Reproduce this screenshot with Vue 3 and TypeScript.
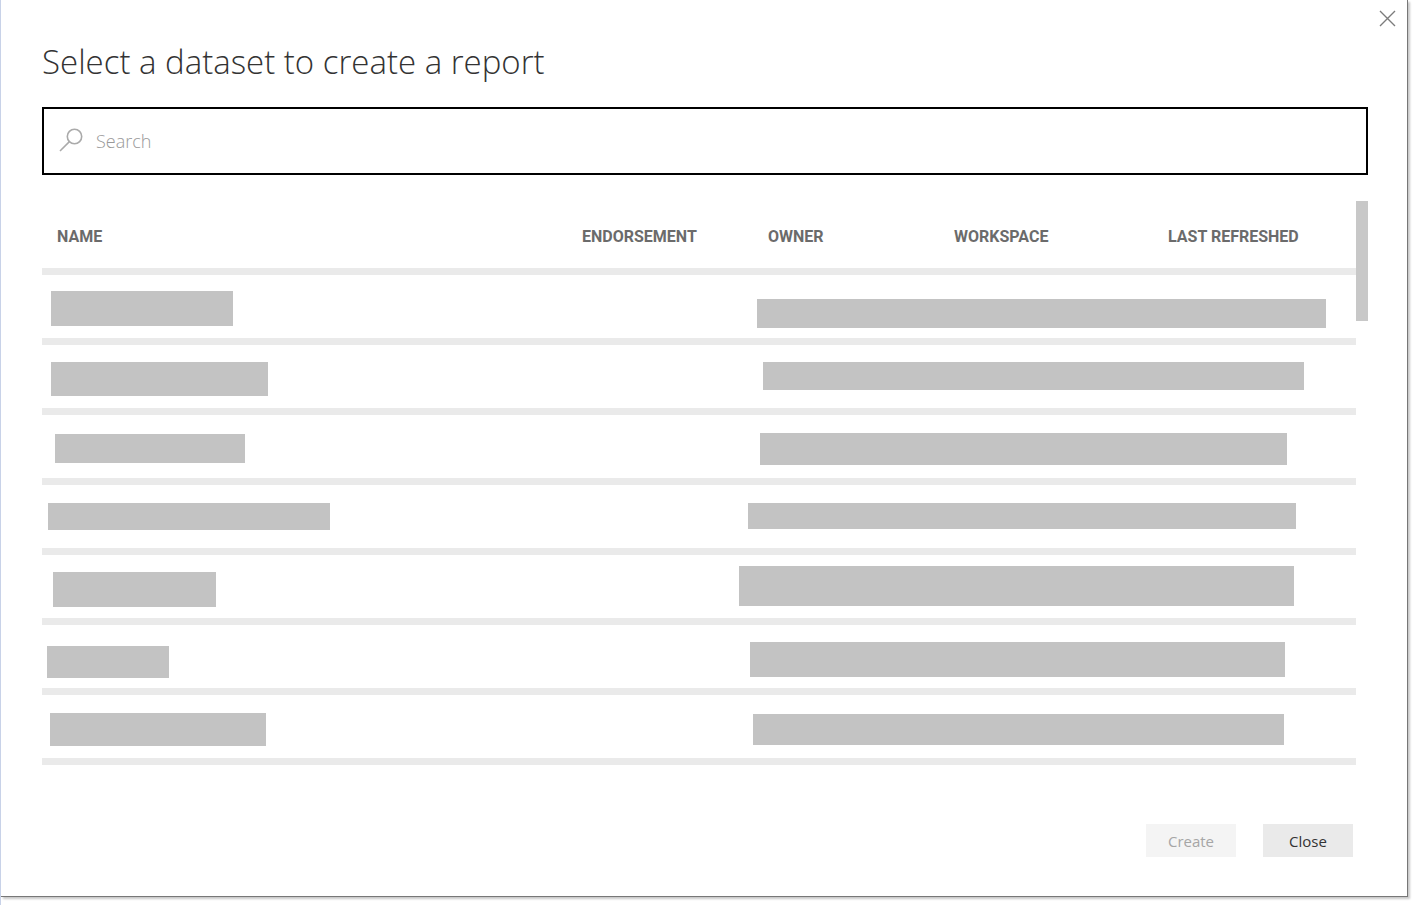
<script setup lang="ts">
import { ref } from 'vue'

interface Block {
  left: number
  top: number
  width: number
  height: number
}

interface Row {
  id: number
  name: Block
  details: Block
}

const query = ref('')

const block = (left: number, top: number, width: number, height: number): Block => ({
  left,
  top,
  width,
  height,
})

const rows: Row[] = [
  { id: 1, name: block(9, 16, 182, 35), details: block(19, 24, 569, 29) },
  { id: 2, name: block(9, 17, 217, 34), details: block(25, 17, 541, 28) },
  { id: 3, name: block(13, 19, 190, 29), details: block(22, 18, 527, 32) },
  { id: 4, name: block(6, 18, 282, 27), details: block(10, 18, 548, 26) },
  { id: 5, name: block(11, 17, 163, 35), details: block(1, 11, 555, 40) },
  { id: 6, name: block(5, 21, 122, 32), details: block(12, 17, 535, 35) },
  { id: 7, name: block(8, 18, 216, 33), details: block(15, 19, 531, 31) },
]

const blockStyle = (b: Block) => ({
  marginLeft: `${b.left}px`,
  marginTop: `${b.top}px`,
  width: `${b.width}px`,
  height: `${b.height}px`,
})
</script>

<template>
  <div class="page">
    <section class="dialog" role="dialog" aria-labelledby="dialog-title">
      <button class="dismiss" type="button" aria-label="Dismiss">
        <svg width="17" height="17" viewBox="0 0 17 17" aria-hidden="true">
          <path d="M1 1L16 16M16 1L1 16" fill="none" stroke="#7c7c7c" stroke-width="1.4" />
        </svg>
      </button>

      <h1 id="dialog-title" class="title">Select a dataset to create a report</h1>

      <label class="search">
        <svg class="search-icon" width="24" height="24" viewBox="0 0 24 24" aria-hidden="true">
          <circle cx="15.5" cy="8.5" r="7.2" fill="none" stroke="#aaa" stroke-width="1.6" />
          <path d="M10.4 13.6L1 23" fill="none" stroke="#aaa" stroke-width="1.6" />
        </svg>
        <input v-model="query" class="search-input" type="text" placeholder="Search" aria-label="Search" />
      </label>

      <div class="list">
        <table class="datasets">
          <colgroup>
            <col />
            <col class="col-endorsement" />
            <col class="col-owner" />
            <col class="col-workspace" />
            <col class="col-refreshed" />
          </colgroup>
          <thead>
            <tr>
              <th scope="col">NAME</th>
              <th scope="col">ENDORSEMENT</th>
              <th scope="col" class="owner">OWNER</th>
              <th scope="col">WORKSPACE</th>
              <th scope="col">LAST REFRESHED</th>
            </tr>
          </thead>
          <tbody>
            <tr v-for="row in rows" :key="row.id">
              <td><div class="block" :style="blockStyle(row.name)"></div></td>
              <td></td>
              <td colspan="3"><div class="block" :style="blockStyle(row.details)"></div></td>
            </tr>
          </tbody>
        </table>
        <div class="scroll-thumb"></div>
      </div>

      <footer class="actions">
        <button class="action" type="button" disabled>Create</button>
        <button class="action" type="button">Close</button>
      </footer>
    </section>
  </div>
</template>

<style>
body {
  background: #fff;
}
</style>

<style scoped>
.page {
  box-sizing: border-box;
  display: flex;
  min-height: 100vh;
  padding: 0 11px 8px 0;
  border-left: 1px solid #c8d2e8;
  font-family: 'Open Sans', sans-serif;
}

.dialog {
  position: relative;
  box-sizing: border-box;
  flex: 1;
  display: flex;
  flex-direction: column;
  padding: 0 39px 39px 41px;
  background: #fff;
  border-right: 1px solid #777;
  border-bottom: 1px solid #777;
  box-shadow: 2px 2px 2px rgba(0, 0, 0, 0.22);
}

.dismiss {
  position: absolute;
  top: 10px;
  right: 11px;
  display: flex;
  padding: 0;
  border: 0;
  background: none;
}

.title {
  margin: 37px 0 20px;
  font-size: 33px;
  font-weight: 300;
  line-height: 50px;
  color: #333;
}

.search {
  box-sizing: border-box;
  display: flex;
  align-items: center;
  gap: 13px;
  height: 68px;
  padding: 0 15px;
  border: 2px solid #000;
}

.search-icon {
  flex: none;
  margin-bottom: 2px;
}

.search-input {
  flex: 1;
  min-width: 0;
  padding: 0;
  border: 0;
  outline: 0;
  background: none;
  font-family: inherit;
  font-size: 18px;
  font-weight: 300;
  line-height: 28px;
  color: #444;
}

.search-input::placeholder {
  color: #999;
  opacity: 1;
}

.list {
  display: flex;
  align-items: flex-start;
  margin-top: 26px;
}

.datasets {
  flex: 1;
  width: 100%;
  table-layout: fixed;
  border-spacing: 0;
}

.col-endorsement {
  width: 171px;
}

.col-owner {
  width: 201px;
}

.col-workspace {
  width: 214px;
}

.col-refreshed {
  width: 203px;
}

th,
td {
  box-sizing: border-box;
  height: 70px;
  padding: 0;
  border-bottom: 7px solid #eaeaea;
}

th {
  height: 74px;
  padding: 5px 0 0 15px;
  font-family: Roboto, sans-serif;
  font-size: 16px;
  font-weight: 700;
  line-height: 20px;
  text-align: left;
  white-space: nowrap;
  color: #6b6b6b;
}

th.owner {
  padding-left: 30px;
}

td {
  vertical-align: top;
}

.block {
  background: #c3c3c3;
}

.scroll-thumb {
  flex: none;
  width: 12px;
  height: 120px;
  background: #c8c8c8;
}

.actions {
  display: flex;
  justify-content: flex-end;
  gap: 27px;
  margin-top: auto;
  padding: 24px 15px 0 0;
}

.action {
  width: 90px;
  height: 33px;
  padding: 0;
  border: 0;
  background: #eaeaea;
  font-family: inherit;
  font-size: 15px;
  line-height: 20px;
  color: #333;
}

.action:disabled {
  background: #f4f4f4;
  color: #a6a6a6;
}
</style>
